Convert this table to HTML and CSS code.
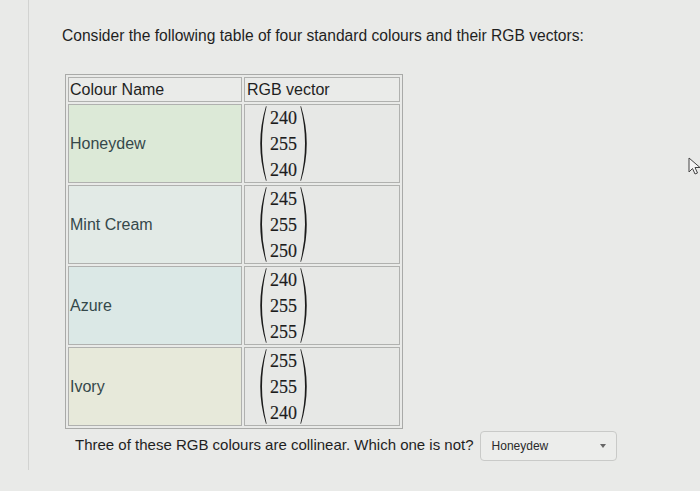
FILE: index.html
```html
<!DOCTYPE html>
<html>
<head>
<meta charset="utf-8">
<link rel="stylesheet" href="styles.css">
</head>
<body>
<div class="frame">
  <p class="title">Consider the following table of four standard colours and their RGB vectors:</p>
  <table class="colours">
    <tr class="head">
      <td class="name-h">Colour Name</td>
      <td class="vec-h">RGB vector</td>
    </tr>
    <tr>
      <td class="name honeydew">Honeydew</td>
      <td class="vec">
        <div class="matrix">
          <svg class="paren" width="12" height="77" viewBox="0 0 12 77"><path d="M11 1 Q-0.5 38.5 11 76 L11.6 75.4 Q2.4 38.5 11.6 1.6 Z" fill="#1c1c1c"/></svg>
          <div class="nums"><span>240</span><span>255</span><span>240</span></div>
          <svg class="paren" width="12" height="77" viewBox="0 0 12 77"><path d="M1 1 Q12.5 38.5 1 76 L0.4 75.4 Q9.6 38.5 0.4 1.6 Z" fill="#1c1c1c"/></svg>
        </div>
      </td>
    </tr>
    <tr>
      <td class="name mint">Mint Cream</td>
      <td class="vec">
        <div class="matrix">
          <svg class="paren" width="12" height="77" viewBox="0 0 12 77"><path d="M11 1 Q-0.5 38.5 11 76 L11.6 75.4 Q2.4 38.5 11.6 1.6 Z" fill="#1c1c1c"/></svg>
          <div class="nums"><span>245</span><span>255</span><span>250</span></div>
          <svg class="paren" width="12" height="77" viewBox="0 0 12 77"><path d="M1 1 Q12.5 38.5 1 76 L0.4 75.4 Q9.6 38.5 0.4 1.6 Z" fill="#1c1c1c"/></svg>
        </div>
      </td>
    </tr>
    <tr>
      <td class="name azure">Azure</td>
      <td class="vec">
        <div class="matrix">
          <svg class="paren" width="12" height="77" viewBox="0 0 12 77"><path d="M11 1 Q-0.5 38.5 11 76 L11.6 75.4 Q2.4 38.5 11.6 1.6 Z" fill="#1c1c1c"/></svg>
          <div class="nums"><span>240</span><span>255</span><span>255</span></div>
          <svg class="paren" width="12" height="77" viewBox="0 0 12 77"><path d="M1 1 Q12.5 38.5 1 76 L0.4 75.4 Q9.6 38.5 0.4 1.6 Z" fill="#1c1c1c"/></svg>
        </div>
      </td>
    </tr>
    <tr>
      <td class="name ivory">Ivory</td>
      <td class="vec">
        <div class="matrix">
          <svg class="paren" width="12" height="77" viewBox="0 0 12 77"><path d="M11 1 Q-0.5 38.5 11 76 L11.6 75.4 Q2.4 38.5 11.6 1.6 Z" fill="#1c1c1c"/></svg>
          <div class="nums"><span>255</span><span>255</span><span>240</span></div>
          <svg class="paren" width="12" height="77" viewBox="0 0 12 77"><path d="M1 1 Q12.5 38.5 1 76 L0.4 75.4 Q9.6 38.5 0.4 1.6 Z" fill="#1c1c1c"/></svg>
        </div>
      </td>
    </tr>
  </table>
  <div class="question">
    <span class="q-text">Three of these RGB colours are collinear. Which one is not?</span>
    <div class="select">
      <span class="sel-val">Honeydew</span>
      <span class="caret"></span>
    </div>
  </div>
</div>
<svg class="cursor" width="14" height="20" viewBox="0 0 14 20"><path d="M1 1 L1 15 L4.5 11.5 L7 17 L9.5 16 L7 10.5 L12 10.5 Z" fill="#f4f4f4" stroke="#444" stroke-width="1"/></svg>
</body>
</html>
```

FILE: styles.css
```css
html, body {
  margin: 0;
  padding: 0;
  background: #e9eae8;
  font-family: "Liberation Sans", Arial, sans-serif;
  color: #1f1f1f;
}

.frame {
  margin-left: 28px;
  border-left: 1px solid #d2d3d1;
  height: 470px;
  padding-left: 33px;
  padding-top: 26px;
  box-sizing: border-box;
}

.title {
  margin: 0;
  font-size: 15.6px;
  line-height: 20px;
}

.colours {
  margin-top: 28px;
  margin-left: 3px;
  border: 1px solid #a9aaa8;
  border-spacing: 2px;
  font-size: 16px;
  width: 338px;
}

.colours td {
  border: 1px solid #b0b1af;
  padding: 0 1px;
}

.head td {
  height: 23px;
  background: #eaebe9;
}

.name-h {
  width: 170px;
}

.vec-h {
  padding-left: 2px !important;
}

.name {
  color: #35484a;
  vertical-align: middle;
}

.honeydew { background: #dce9d7; }
.mint { background: #e2eae6; }
.azure { background: #dbe8e6; }
.ivory { background: #e7e9da; }

.vec {
  background: #e7e8e6;
  padding: 0 0 0 10px !important;
}

.matrix {
  display: flex;
  align-items: center;
  height: 77px;
}

.nums {
  display: flex;
  flex-direction: column;
  align-items: center;
  width: 33px;
  font-family: "Liberation Serif", "DejaVu Serif", serif;
  font-size: 18px;
  line-height: 26px;
  color: #1c1c1c;
  -webkit-text-stroke: 0.15px #1c1c1c;
}

.question {
  display: flex;
  align-items: center;
  gap: 6px;
  margin-left: 13px;
  margin-top: -2px;
}

.q-text {
  font-size: 15px;
}

.select {
  width: 137px;
  height: 30px;
  box-sizing: border-box;
  border: 1px solid #c9cac8;
  border-radius: 4px;
  background: #ecedeb;
  display: flex;
  align-items: center;
  justify-content: space-between;
  padding: 0 10px 0 11px;
  margin-top: 4px;
}

.sel-val {
  font-size: 12px;
  color: #2a2a2a;
}

.caret {
  width: 0;
  height: 0;
  border-left: 3px solid transparent;
  border-right: 3px solid transparent;
  border-top: 4px solid #666;
}

.cursor {
  position: absolute;
  left: 688px;
  top: 157px;
}
```
